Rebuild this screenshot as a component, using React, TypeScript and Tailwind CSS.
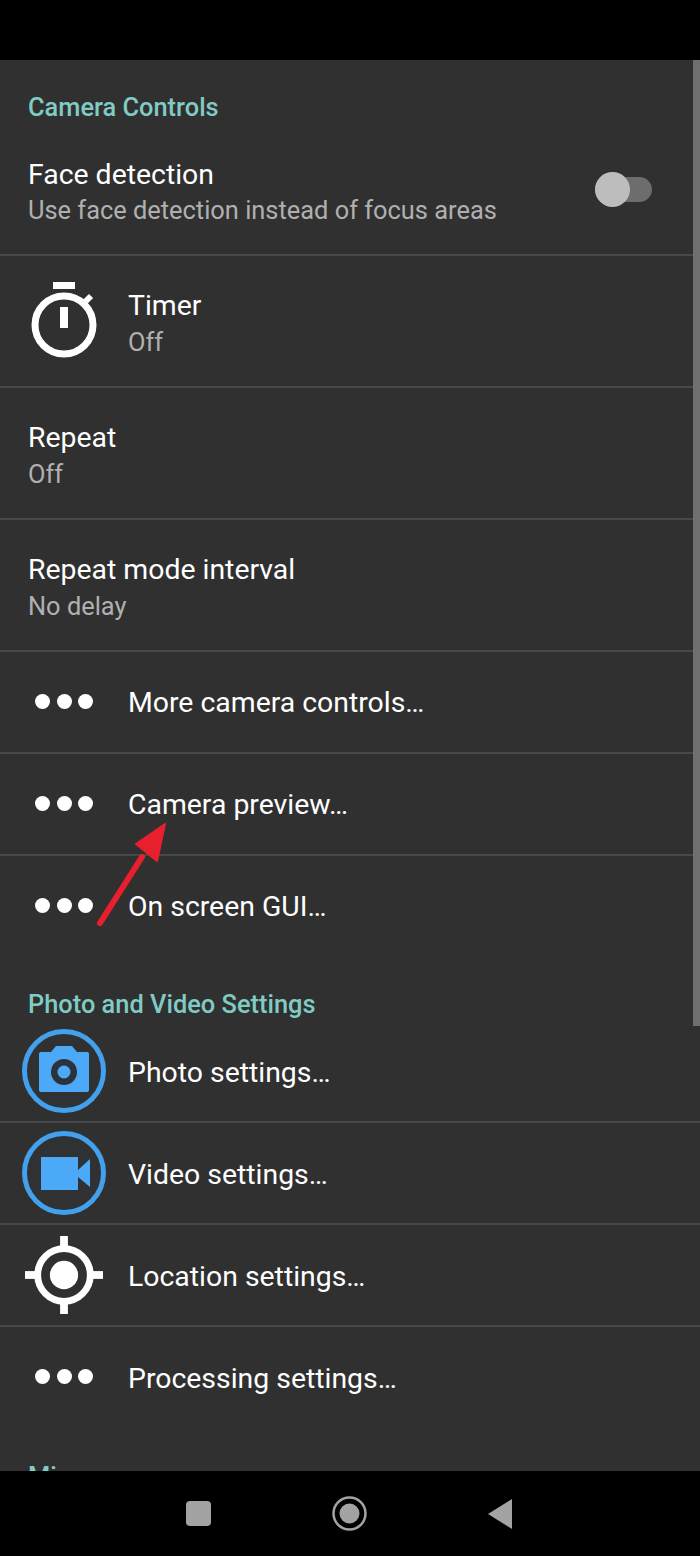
import React from 'react'

function Dots() {
  return (
    <div className="flex gap-[6.5px] items-center justify-center w-full pb-[2px]">
      <div className="w-[15px] h-[15px] rounded-full bg-white" />
      <div className="w-[15px] h-[15px] rounded-full bg-white" />
      <div className="w-[15px] h-[15px] rounded-full bg-white" />
    </div>
  )
}

function TimerIcon() {
  return (
    <svg width="70" height="78" viewBox="0 0 70 78">
      <rect x="24" y="0" width="22" height="7" fill="#fff" />
      <circle cx="35" cy="43" r="29" fill="none" stroke="#fff" strokeWidth="7" />
      <rect x="31" y="25" width="8" height="21" fill="#fff" />
      <path d="M55 21 L62 14" stroke="#fff" strokeWidth="6" />
    </svg>
  )
}

function PhotoIcon() {
  return (
    <svg width="86" height="86" viewBox="0 0 86 86">
      <circle cx="43" cy="43" r="39.5" fill="#2f3133" stroke="#42a0ec" strokeWidth="5" />
      <path d="M20 24 H30 L35 18 H51 L56 24 H66 Q68 24 68 26 V62 Q68 64 66 64 H20 Q18 64 18 62 V26 Q18 24 20 24 Z" fill="#4ba9f7" />
      <circle cx="43" cy="44" r="13" fill="#2d3238" />
      <circle cx="43" cy="44" r="6.5" fill="#4ba9f7" />
    </svg>
  )
}

function VideoIcon() {
  return (
    <svg width="86" height="86" viewBox="0 0 86 86">
      <circle cx="43" cy="43" r="39.5" fill="#2f3133" stroke="#42a0ec" strokeWidth="5" />
      <path d="M20 27 H57 V40 L69 29 V57 L57 47 V60 H20 Z" fill="#4ba9f7" />
    </svg>
  )
}

function LocationIcon() {
  return (
    <svg width="78" height="78" viewBox="0 0 80 80">
      <circle cx="40" cy="40" r="27" fill="none" stroke="#fff" strokeWidth="7" />
      <circle cx="40" cy="40" r="14.5" fill="#fff" />
      <rect x="36" y="0" width="8" height="12" fill="#fff" />
      <rect x="36" y="68" width="8" height="12" fill="#fff" />
      <rect x="0" y="36" width="12" height="8" fill="#fff" />
      <rect x="68" y="36" width="12" height="8" fill="#fff" />
    </svg>
  )
}

function Row({ icon, title, summary, height, last, lower }: { icon?: React.ReactNode; title: string; summary?: string; height: string; last?: boolean; lower?: boolean }) {
  return (
    <div className={`flex items-center ${last ? 'pb-[2px]' : 'border-b-2 border-[#474849]'} ${height}`}>
      {icon !== undefined && (
        <div className="w-[128px] shrink-0 flex justify-center">{icon}</div>
      )}
      <div className={`${icon === undefined ? 'pl-[28px]' : ''} ${summary ? 'pt-[6px]' : lower ? 'pt-[4px]' : 'pt-[2px]'}`}>
        <div className="text-[28.4px] leading-[36px] text-white">{title}</div>
        {summary && <div className="text-[25.4px] leading-[36px] text-[#b0b0b0]">{summary}</div>}
      </div>
    </div>
  )
}

export default function App() {
  return (
    <div className="w-[700px] h-[1556px] bg-black flex flex-col font-['Roboto',sans-serif] overflow-hidden">
      <div className="h-[60px] shrink-0" />

      <div className="relative flex-1 bg-[#303030] overflow-hidden">
        <div className="pl-[28px] pt-[32px] h-[80px] text-[25.4px] leading-[30px] font-medium text-[#80cbc4]">Camera Controls</div>

        <div className="flex items-center justify-between border-b-2 border-[#474849] h-[116px] pl-[28px] pr-[48px] pb-[10px]">
          <div>
            <div className="text-[28.4px] leading-[36px] text-white">Face detection</div>
            <div className="text-[25.4px] leading-[35px] text-[#b0b0b0]">Use face detection instead of focus areas</div>
          </div>
          <div className="relative w-[57px] h-[25px] mb-[5px] rounded-full bg-[#6d6d6d]">
            <div className="absolute left-0 -top-[5px] w-[35px] h-[35px] rounded-full bg-[#bdbdbd]" />
          </div>
        </div>

        <Row height="h-[132px]" icon={<TimerIcon />} title="Timer" summary="Off" />
        <Row height="h-[132px]" title="Repeat" summary="Off" />
        <Row height="h-[132px]" title="Repeat mode interval" summary="No delay" />
        <Row height="h-[102px]" icon={<Dots />} title="More camera controls…" />
        <Row height="h-[102px]" icon={<Dots />} title="Camera preview…" />
        <Row height="h-[102px]" icon={<Dots />} title="On screen GUI…" last />

        <div className="pl-[28px] pt-[31px] h-[63px] text-[25.4px] leading-[30px] font-medium text-[#80cbc4]">Photo and Video Settings</div>

        <Row height="h-[102px]" icon={<PhotoIcon />} title="Photo settings…" lower />
        <Row height="h-[102px]" icon={<VideoIcon />} title="Video settings…" lower />
        <Row height="h-[102px]" icon={<LocationIcon />} title="Location settings…" lower />
        <Row height="h-[102px]" icon={<Dots />} title="Processing settings…" last lower />

        <div className="pl-[28px] pt-[32px] text-[25.4px] leading-[30px] font-medium text-[#80cbc4]">Misc</div>

        {/* scrollbar */}
        <div className="absolute right-0 top-0 w-[7px] h-[966px] bg-[#6f6f6f]" />

        {/* red arrow annotation */}
        <svg className="absolute left-[90px] top-[760px]" width="90" height="120" viewBox="0 0 90 120">
          <path d="M10 103 L52 37" stroke="#e8202e" strokeWidth="6" strokeLinecap="round" />
          <path d="M75 4 L46 24 L67 41 Z" fill="#e8202e" stroke="#e8202e" strokeWidth="2" strokeLinejoin="round" />
        </svg>
      </div>

      <div className="relative h-[85px] shrink-0">
        <div className="absolute left-[186px] top-[30px] w-[25px] h-[25px] rounded-[4px] bg-[#a3a3a3]" />
        <svg className="absolute left-[332px] top-[25px]" width="35" height="35" viewBox="0 0 35 35">
          <circle cx="17.5" cy="17.5" r="16" fill="none" stroke="#a3a3a3" strokeWidth="2.5" />
          <circle cx="17.5" cy="17.5" r="10" fill="#a3a3a3" />
        </svg>
        <svg className="absolute left-[488px] top-[28px]" width="25" height="31" viewBox="0 0 25 31">
          <path d="M0 15 L24 0 V30 Z" fill="#a3a3a3" />
        </svg>
      </div>
    </div>
  )
}
